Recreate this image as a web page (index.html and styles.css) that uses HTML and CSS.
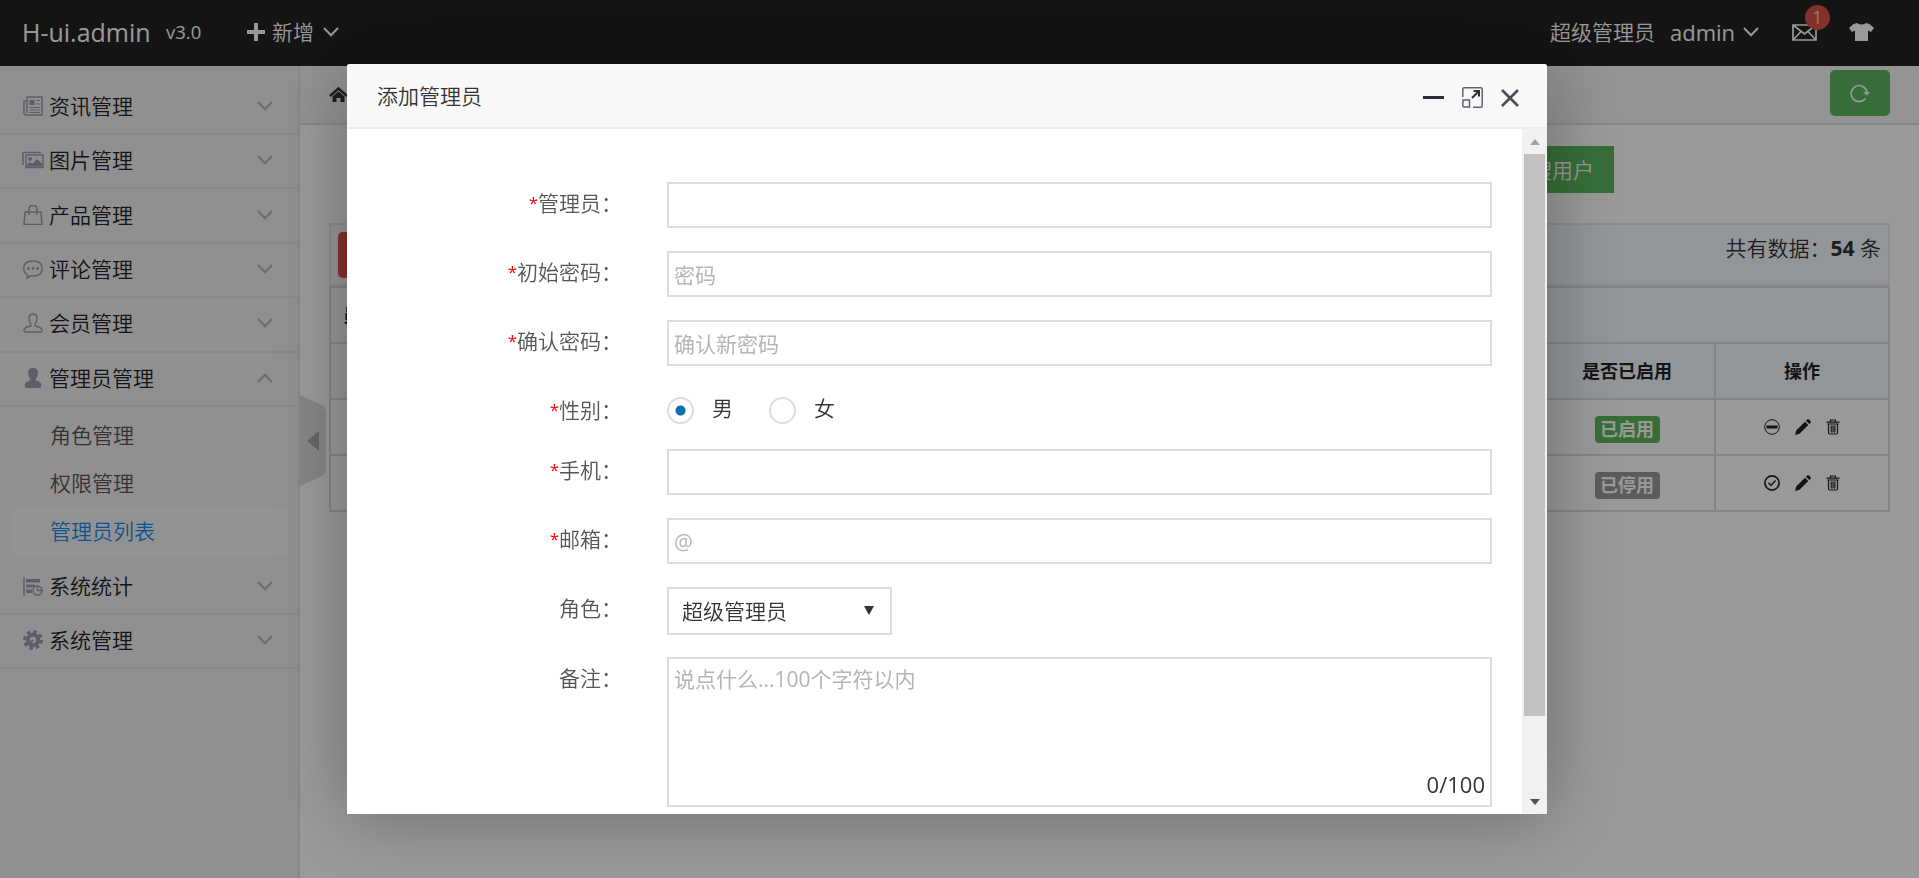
FILE: index.html
```html
<!DOCTYPE html>
<html lang="zh-CN">
<head>
    <meta charset="UTF-8">
    <meta name="viewport" content="width=device-width, initial-scale=1.0">
    <title>H-ui.admin v3.0</title>
    <link rel="stylesheet" href="styles.css">
</head>
<body>
    <!-- 公共图标 -->
    <svg class="sprite" width="0" height="0">
        <symbol id="i-down" viewBox="0 0 16 10"><path d="M1 1l7 7.2L15 1" fill="none" stroke="currentColor" stroke-width="2"/></symbol>
        <symbol id="i-up" viewBox="0 0 16 10"><path d="M1 9l7-7.2L15 9" fill="none" stroke="currentColor" stroke-width="2"/></symbol>
        <symbol id="i-edit" viewBox="0 0 16 16"><path d="M0 16l1.2-4.5L10 2.7 13.3 6l-8.8 8.8zM11 1.7l1.2-1.2q.9-.9 1.8 0l1.5 1.5q.9.9 0 1.8L14.300 5z" fill="currentColor"/></symbol>
        <symbol id="i-del" viewBox="0 0 14 16"><path d="M.5 3.200h13M4.500 3V1h5v2M1.500 5h11M2.500 5v8.500q0 1.500 1.500 1.500h6q1.500 0 1.500-1.500V5M5.200 6.500v7M7 6.500v7M8.800 6.500v7" fill="none" stroke="currentColor" stroke-width="1.200"/></symbol>
    </svg>

    <header class="navbar">
        <span class="logo">H-ui.admin</span>
        <span class="version">v3.0</span>
        <div class="nav-add">
            <svg width="18" height="18" viewBox="0 0 18 18"><path d="M9 0v18M0 9h18" stroke="currentColor" stroke-width="4"/></svg>
            <span>新增</span>
            <svg class="arrow" width="16" height="10"><use href="#i-down"/></svg>
        </div>
        <div class="nav-user">
            <span>超级管理员</span>
            <span class="user-name">admin</span>
            <svg class="arrow" width="16" height="10"><use href="#i-down"/></svg>
            <div class="msg">
                <svg width="25" height="17" viewBox="0 0 25 17"><path d="M1 1h23v15H1zM1 1l11.500 9L24 1M1 16l8-8.500M24 16l-8-8.500" fill="none" stroke="currentColor" stroke-width="1.700"/></svg>
                <span class="badge">1</span>
            </div>
            <svg class="skin" width="25" height="18" viewBox="0 0 25 18"><path d="M8 0q4.500 3 9 0l3.500 1L25 5l-3 4-3-1.500V18H6V7.500L3 9 0 5l4.500-4z" fill="currentColor"/></svg>
        </div>
    </header>

    <div class="page">
        <aside class="sidebar">
            <div class="menu-item">
                <svg class="icon" viewBox="0 0 20 20"><path d="M4 1h15v18H3q-2 0-2-2V5h3zM4 5v12" fill="none" stroke="currentColor" stroke-width="1.500"/><path d="M6.500 4h5v5h-5z" fill="currentColor"/><path d="M13 4.500h4M13 8h4M6.500 11.500H17M6.500 14H17M6.500 16.500H17" stroke="currentColor" stroke-width="1.200"/></svg>
                <span>资讯管理</span>
                <svg class="fold" width="16" height="10"><use href="#i-down"/></svg>
            </div>
            <div class="menu-item">
                <svg class="icon wide" viewBox="0 0 22 20"><path d="M1 15V2.500h18M4 5h17v12.500H4z" fill="none" stroke="currentColor" stroke-width="1.500"/><circle cx="8" cy="9" r="2" fill="currentColor"/><path d="M5 16.500v-2l3-2.500 2.500 1.500L15 9l5 4.500v3z" fill="currentColor"/></svg>
                <span>图片管理</span>
                <svg class="fold" width="16" height="10"><use href="#i-down"/></svg>
            </div>
            <div class="menu-item">
                <svg class="icon" viewBox="0 0 20 20"><path d="M2 7h16l1 12.500H1zM6 10V4.500q0-4 4-4t4 4V10" fill="none" stroke="currentColor" stroke-width="1.500"/></svg>
                <span>产品管理</span>
                <svg class="fold" width="16" height="10"><use href="#i-down"/></svg>
            </div>
            <div class="menu-item">
                <svg class="icon" viewBox="0 0 20 20"><path d="M5 16.500Q.8 14 .8 9.500.8 2 10 2t9.200 7.500T10 17q-1 0-2-.2L4 19z" fill="none" stroke="currentColor" stroke-width="1.400"/><circle cx="5.500" cy="9.500" r="1.400" fill="currentColor"/><circle cx="10" cy="9.500" r="1.400" fill="currentColor"/><circle cx="14.500" cy="9.500" r="1.400" fill="currentColor"/></svg>
                <span>评论管理</span>
                <svg class="fold" width="16" height="10"><use href="#i-down"/></svg>
            </div>
            <div class="menu-item">
                <svg class="icon" viewBox="0 0 20 20"><path d="M10 1q4 0 4 4.500 0 2.500-1.800 5.300V13q6.800 1.200 6.800 4.500 0 1.500-1.500 1.500h-15Q1 19 1 17.500 1 14.200 7.800 13v-2.200Q6 8 6 5.500 6 1 10 1z" fill="none" stroke="currentColor" stroke-width="1.400"/></svg>
                <span>会员管理</span>
                <svg class="fold" width="16" height="10"><use href="#i-down"/></svg>
            </div>
            <div class="menu-item">
                <svg class="icon" viewBox="0 0 20 20"><path d="M10 0q5 0 5 5 0 3.500-2.200 6v1.500q5.500 1 5.500 4.500 0 3-1.600 3H3.300q-1.600 0-1.600-3 0-3.500 5.500-4.500V11Q5 8.500 5 5q0-5 5-5z" fill="currentColor"/></svg>
                <span>管理员管理</span>
                <svg class="fold" width="16" height="10"><use href="#i-up"/></svg>
            </div>
            <ul class="submenu">
                <li>角色管理</li>
                <li>权限管理</li>
                <li class="current">管理员列表</li>
            </ul>
            <div class="menu-item">
                <svg class="icon" viewBox="0 0 20 20"><path d="M1 1v19" stroke="currentColor" stroke-width="1.500"/><path d="M3 3h14v3.500H3zM3 8.500h9v3H3zM3 13.500h6V17H3z" fill="currentColor"/><circle cx="14.500" cy="14.500" r="4.500" fill="none" stroke="currentColor" stroke-width="1.500"/><path d="M14.500 9v5.500H20" fill="none" stroke="currentColor" stroke-width="1.500"/></svg>
                <span>系统统计</span>
                <svg class="fold" width="16" height="10"><use href="#i-down"/></svg>
            </div>
            <div class="menu-item">
                <svg class="icon" viewBox="0 0 20 20"><circle cx="10" cy="10" r="8.200" fill="none" stroke="currentColor" stroke-width="3.400" stroke-dasharray="3.540 2.900"/><circle cx="10" cy="10" r="5.200" fill="none" stroke="currentColor" stroke-width="4"/><path d="M10 10l-4 4" stroke="currentColor" stroke-width="2"/></svg>
                <span>系统管理</span>
                <svg class="fold" width="16" height="10"><use href="#i-down"/></svg>
            </div>
            <div class="side-toggle"><i></i></div>
        </aside>

        <main class="main">
            <div class="breadcrumb">
                <svg width="20" height="16" viewBox="0 0 20 16"><path d="M1 9l8.500-7.500L18 9" fill="none" stroke="currentColor" stroke-width="2.500"/><path d="M3.500 9.500l6-5.300 6 5.300V15h-4v-4h-4v4h-4z" fill="currentColor"/></svg>
                <span class="btn-refresh">
                    <svg width="20" height="19" viewBox="0 0 20 19"><path d="M15.500 14.500A8 8 0 1 1 17 8" fill="none" stroke="currentColor" stroke-width="1.600"/><path d="M13 8h7l-3 3.500z" fill="currentColor"/></svg>
                </span>
            </div>
            <div class="search">
                <span class="btn-search">搜用户</span>
            </div>
            <div class="toolbar">
                <span class="btn-danger">批量删除</span>
                <span class="count">共有数据：<b>54</b> 条</span>
            </div>
            <table class="table">
                <colgroup>
                    <col class="col-check">
                    <col>
                    <col class="col-state">
                    <col class="col-op">
                </colgroup>
                <thead>
                    <tr><th class="title" colspan="4">员工列表</th></tr>
                    <tr><th><input type="checkbox"></th><th></th><th>是否已启用</th><th>操作</th></tr>
                </thead>
                <tbody>
                    <tr>
                        <td><input type="checkbox"></td>
                        <td></td>
                        <td><span class="label success">已启用</span></td>
                        <td>
                            <div class="ops">
                                <svg width="16" height="16" viewBox="0 0 16 16"><circle cx="8" cy="8" r="7.300" fill="none" stroke="currentColor"/><path d="M2.500 8h11" stroke="currentColor" stroke-width="3"/></svg>
                                <svg width="16" height="16"><use href="#i-edit"/></svg>
                                <svg width="14" height="16"><use href="#i-del"/></svg>
                            </div>
                        </td>
                    </tr>
                    <tr>
                        <td><input type="checkbox"></td>
                        <td></td>
                        <td><span class="label">已停用</span></td>
                        <td>
                            <div class="ops">
                                <svg width="16" height="16" viewBox="0 0 16 16"><circle cx="8" cy="8" r="7.100" fill="none" stroke="currentColor" stroke-width="1.700"/><path d="M4.500 7.800l2.500 2.700 4.500-5" fill="none" stroke="currentColor" stroke-width="1.500"/></svg>
                                <svg width="16" height="16"><use href="#i-edit"/></svg>
                                <svg width="14" height="16"><use href="#i-del"/></svg>
                            </div>
                        </td>
                    </tr>
                </tbody>
            </table>
        </main>
    </div>

    <div class="shade"></div>

    <div class="layer">
        <div class="layer-title">
            <span>添加管理员</span>
            <div class="layer-btns">
                <i class="min"></i>
                <svg width="21" height="21" viewBox="0 0 21 21"><path d="M.8 10V2Q.8.800 2 .8h17q1.200 0 1.200 1.200v17q0 1.200-1.200 1.200h-8M1 13h6.500v7H2q-1.200 0-1.200-1.200z" fill="none" stroke="#625f70" stroke-width="1.500"/><path d="M10 11l7-7M11.500 4H17v5.500" fill="none" stroke="#2e2d3c" stroke-width="2"/></svg>
                <svg width="18" height="18" viewBox="0 0 18 18"><path d="M1 1l16 16M17 1L1 17" stroke="#4b4a58" stroke-width="2.600"/></svg>
            </div>
        </div>
        <div class="layer-body">
            <form class="form">
                <div class="row">
                    <label><em>*</em>管理员：</label>
                    <input type="text" class="input-text">
                </div>
                <div class="row">
                    <label><em>*</em>初始密码：</label>
                    <input type="password" class="input-text" placeholder="密码">
                </div>
                <div class="row">
                    <label><em>*</em>确认密码：</label>
                    <input type="password" class="input-text" placeholder="确认新密码">
                </div>
                <div class="row row-radio">
                    <label><em>*</em>性别：</label>
                    <span class="radio checked"></span><span class="radio-text">男</span>
                    <span class="radio"></span><span class="radio-text">女</span>
                </div>
                <div class="row">
                    <label><em>*</em>手机：</label>
                    <input type="text" class="input-text">
                </div>
                <div class="row">
                    <label><em>*</em>邮箱：</label>
                    <input type="text" class="input-text" placeholder="@">
                </div>
                <div class="row row-select">
                    <label>角色：</label>
                    <div class="select-box"><span>超级管理员</span><i></i></div>
                </div>
                <div class="row row-area">
                    <label>备注：</label>
                    <div class="area">
                        <textarea placeholder="说点什么...100个字符以内"></textarea>
                        <span class="counter">0/100</span>
                    </div>
                </div>
            </form>
            <div class="scrollbar">
                <i class="up"></i>
                <div class="thumb"></div>
                <i class="down"></i>
            </div>
        </div>
    </div>
</body>
</html>
```
FILE: styles.css
```css
* {
    box-sizing: border-box;
}

body {
    margin: 0;
    height: 878px;
    overflow: hidden;
    background: #fff;
    color: #333;
    font-family: "Open Sans", "Noto Sans CJK SC", sans-serif;
    font-size: 21px;
    font-weight: 350;
    line-height: 30px;
}

svg {
    display: block;
    flex: none;
}

.sprite {
    position: absolute;
}

i, em {
    font-style: normal;
}

/* 顶部导航 */
.navbar {
    display: flex;
    align-items: center;
    height: 66px;
    padding: 0 45px 2px 22px;
    background: #222;
    color: #fff;
}

.logo {
    width: 144px;
    font-size: 25px;
    font-weight: 400;
}

.version {
    width: 81px;
    font-size: 18.500px;
    font-weight: 400;
}

.nav-add {
    display: flex;
    align-items: center;
    gap: 7px;
}

.nav-add .arrow {
    margin-left: 2px;
}

.nav-user {
    display: flex;
    align-items: center;
    margin-left: auto;
}

.user-name {
    width: 64px;
    margin: 0 9px 0 15px;
    font-size: 22px;
    font-weight: 400;
}

.msg {
    position: relative;
    margin: 0 32px 0 33px;
}

.badge {
    position: absolute;
    top: -19px;
    right: -13px;
    width: 25px;
    height: 25px;
    border-radius: 50%;
    background: #dd514c;
    font-size: 19px;
    line-height: 24px;
    text-align: center;
}

/* 左侧菜单 */
.page {
    display: flex;
    height: 812px;
}

.sidebar {
    position: relative;
    width: 300px;
    padding-top: 14.600px;
    border-right: 2px solid #e3e3e3;
    background: #f0f0f0;
}

.menu-item {
    display: flex;
    align-items: center;
    height: 54.400px;
    padding: 0 25px 2px 23px;
    border-bottom: 2px solid #e5e5e5;
    color: #222;
}

.menu-item .icon {
    width: 20px;
    height: 20px;
    margin-right: 6px;
    color: #9a9fac;
}

.menu-item .wide {
    width: 22px;
    margin: 0 5px 0 -1px;
}

.menu-item .fold {
    margin-left: auto;
    color: #b5b5b5;
}

.submenu {
    margin: 0;
    padding: 5px 10px 4.600px 12px;
    list-style: none;
}

.submenu li {
    height: 48px;
    padding-left: 38px;
    line-height: 47px;
    color: #555;
}

.submenu .current {
    background: #f3f3f3;
    color: #148cf1;
}

.side-toggle {
    position: absolute;
    top: 329px;
    left: 300px;
    display: flex;
    align-items: center;
    width: 26px;
    height: 91px;
    padding-left: 7px;
    background: #dedede;
    clip-path: polygon(0 0, 92% 12%, 100% 18%, 100% 82%, 92% 88%, 0 100%);
}

.side-toggle i {
    border: solid transparent;
    border-width: 10px 12px 10px 0;
    border-right-color: #aaa;
}

/* 主体 */
.main {
    flex: 1;
}

.breadcrumb {
    display: flex;
    align-items: center;
    justify-content: space-between;
    height: 59px;
    padding: 0 29px 3px;
    border-bottom: 2px solid #e2e2e2;
    background: #f5f5f5;
}

.breadcrumb > svg {
    margin-top: 3px;
}

.btn-refresh {
    display: flex;
    align-items: center;
    justify-content: center;
    width: 60px;
    height: 46px;
    border-radius: 5px;
    background: #5cb85c;
    color: #fff;
}

.search {
    display: flex;
    justify-content: flex-end;
    padding: 21px 305px 30px;
}

.btn-search {
    height: 47px;
    padding: 0 20px;
    background: #5cb85c;
    color: #fff;
    line-height: 48px;
}

.toolbar {
    display: flex;
    justify-content: space-between;
    height: 63px;
    margin: 0 29px;
    padding: 7px;
    border: 2px solid #e9e9e9;
    background: #f5fafe;
}

.btn-danger {
    height: 46px;
    padding: 0 18px;
    border-radius: 5px;
    background: #dd514c;
    color: #fff;
    line-height: 46px;
}

.count {
    line-height: 33px;
}

.count b {
    font-weight: 700;
}

.table {
    width: 1561px;
    margin: 0 29px;
    border: solid #ddd;
    border-width: 2px 0 0 2px;
    border-spacing: 0;
    table-layout: fixed;
    font-size: 18px;
    text-align: center;
}

.table th,
.table td {
    height: 56px;
    padding: 0;
    border: solid #ddd;
    border-width: 0 2px 2px 0;
}

.table th {
    background: #f5fafe;
    color: #222;
    font-weight: 700;
}

.table .title {
    padding-left: 12px;
    text-align: left;
}

.col-check {
    width: 58px;
}

.col-state {
    width: 176px;
}

.col-op {
    width: 174px;
}

.label {
    display: inline-block;
    width: 65px;
    height: 27px;
    margin-top: 4px;
    border-radius: 4px;
    background: #999;
    color: #fff;
    font-weight: 700;
    line-height: 27px;
    vertical-align: middle;
}

.label.success {
    background: #5cb85c;
}

.ops {
    display: flex;
    justify-content: center;
    gap: 15px;
    color: #222;
}

/* 弹层 */
.shade {
    position: fixed;
    inset: 0;
    background: rgba(0, 0, 0, 0.4);
}

.layer {
    position: fixed;
    top: 64px;
    left: 347px;
    width: 1200px;
    height: 750px;
    border-radius: 3px 3px 0 0;
    background: #fff;
    box-shadow: 1px 1px 75px rgba(0, 0, 0, 0.3);
}

.layer-title {
    display: flex;
    align-items: center;
    justify-content: space-between;
    height: 65px;
    padding: 0 28px 0 30px;
    border-bottom: 2px solid #eee;
    border-radius: 3px 3px 0 0;
    background: #f8f8f8;
}

.layer-btns {
    display: flex;
    align-items: center;
    padding-top: 4px;
}

.layer-btns .min {
    width: 21px;
    height: 3px;
    background: #2e2d3c;
}

.layer-btns svg {
    margin-left: 18px;
}

.layer-body {
    display: flex;
    height: 685px;
}

.form {
    flex: 1;
    padding-top: 30px;
}

.row {
    display: flex;
    height: 46px;
    margin-top: 23px;
}

.row label {
    width: 275px;
    margin-right: 45px;
    padding-top: 6px;
    color: #555;
    text-align: right;
}

.row em {
    color: #f00;
    font-size: 17px;
    font-weight: 400;
    vertical-align: 2px;
    line-height: 1;
}

.input-text,
.area textarea {
    width: 825px;
    height: 46px;
    padding: 1px 5px 0;
    border: 2px solid #ddd;
    outline: none;
    font: inherit;
}

.input-text::placeholder,
.area textarea::placeholder {
    color: #b5b5b5;
    opacity: 1;
    font-weight: 400;
}

.row-radio {
    height: 37px;
}

.radio {
    width: 27px;
    height: 27px;
    margin-top: 8px;
    border: 2px solid #ddd;
    border-radius: 50%;
}

.radio.checked {
    background: radial-gradient(circle, #0a70a5 4.500px, #fff 5.500px);
}

.radio-text {
    width: 57px;
    margin: 4px 0 0 18px;
}

.row-select {
    height: 48px;
}

.select-box {
    display: flex;
    align-items: center;
    justify-content: space-between;
    width: 225px;
    padding: 0 16px 0 13px;
    border: 2px solid #ddd;
}

.select-box i {
    margin-bottom: 2px;
    border: solid transparent;
    border-width: 9px 5px 0;
    border-top-color: #333;
}

.row-area {
    height: 150px;
    margin-top: 22px;
}

.area {
    position: relative;
}

.area textarea {
    display: block;
    height: 150px;
    padding-top: 5px;
    resize: none;
}

.counter {
    position: absolute;
    right: 7px;
    bottom: 8px;
    font-size: 22px;
    font-weight: 400;
}

.scrollbar {
    display: flex;
    flex-direction: column;
    align-items: center;
    width: 25px;
    background: #f1f1f1;
}

.scrollbar .up,
.scrollbar .down {
    border: solid transparent;
}

.scrollbar .up {
    margin: 10px 0 9px;
    border-width: 0 5px 6px;
    border-bottom-color: #a3a3a3;
}

.scrollbar .thumb {
    width: 21px;
    height: 562px;
    background: #c1c1c1;
}

.scrollbar .down {
    margin: auto 0 9px;
    border-width: 6px 5px 0;
    border-top-color: #505050;
}
```
